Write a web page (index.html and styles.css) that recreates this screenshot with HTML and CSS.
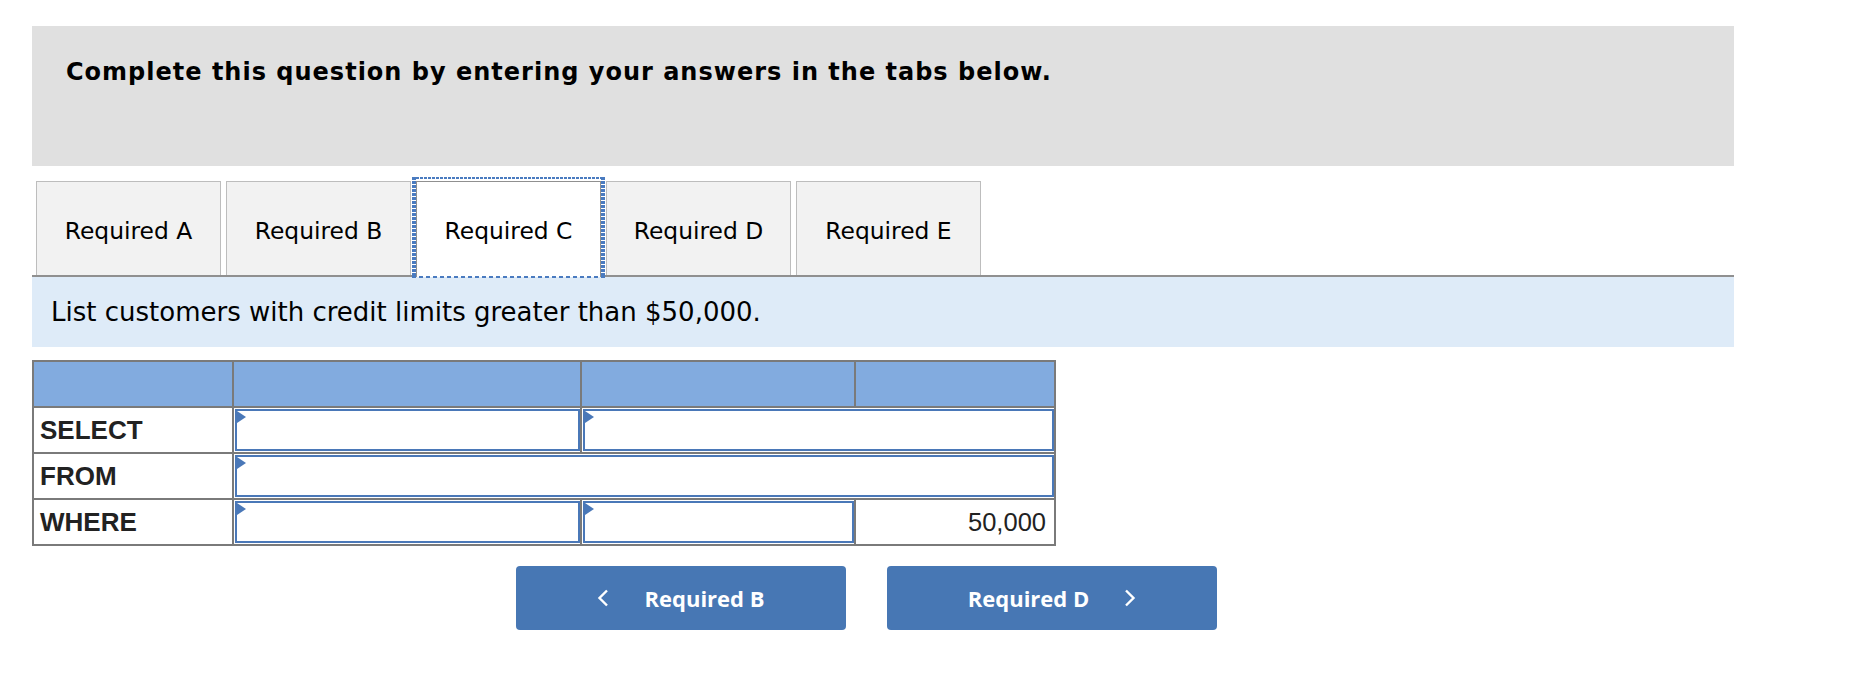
FILE: index.html
```html
<!doctype html>
<html lang="en">
  <head>
    <meta charset="UTF-8" />
    <meta name="viewport" content="width=device-width, initial-scale=1.0" />
    <title>Required C</title>
    <link rel="stylesheet" href="styles.css">
  </head>
  <body>
    <div class="page">
      <div class="prompt">
        <h2>Complete this question by entering your answers in the tabs below.</h2>
      </div>

      <div class="tabs">
        <div class="tab">Required A</div>
        <div class="tab">Required B</div>
        <div class="tab active">Required C</div>
        <div class="tab">Required D</div>
        <div class="tab">Required E</div>
      </div>

      <div class="task">List customers with credit limits greater than $50,000.</div>

      <div class="sql">
        <div class="head"></div>
        <div class="head"></div>
        <div class="head"></div>
        <div class="head"></div>

        <div class="label">SELECT</div>
        <div class="cell"><div class="entry"><input type="text" /></div></div>
        <div class="cell span-2"><div class="entry"><input type="text" /></div></div>

        <div class="label">FROM</div>
        <div class="cell span-3"><div class="entry"><input type="text" /></div></div>

        <div class="label">WHERE</div>
        <div class="cell"><div class="entry"><input type="text" /></div></div>
        <div class="cell"><div class="entry"><input type="text" /></div></div>
        <div class="value">50,000</div>
      </div>

      <div class="nav">
        <button class="nav-btn">
          <svg width="12" height="18" viewBox="0 0 12 18"><polyline points="10,1.5 2.5,9 10,16.5" fill="none" stroke="#fff" stroke-width="2.4" /></svg>
          <span>Required B</span>
        </button>
        <button class="nav-btn">
          <span>Required D</span>
          <svg width="12" height="18" viewBox="0 0 12 18"><polyline points="2,1.5 9.5,9 2,16.5" fill="none" stroke="#fff" stroke-width="2.4" /></svg>
        </button>
      </div>
    </div>
  </body>
</html>
```

FILE: styles.css
```css
body {
  margin: 0;
  font-family: "DejaVu Sans", Verdana, sans-serif;
  color: #000;
}
.page {
  width: 1702px;
  padding: 26px 0 0 32px;
}
.prompt {
  height: 140px;
  box-sizing: border-box;
  padding: 32px 0 0 34px;
  background-color: #e0e0e0;
}
.prompt h2 {
  margin: 0;
  font-size: 24px;
  line-height: 28px;
  font-weight: bold;
  letter-spacing: 1px;
}
.tabs {
  display: flex;
  align-items: flex-start;
  gap: 5px;
  margin-top: 15px;
  padding-left: 4px;
}
.tab {
  width: 185px;
  height: 94px;
  box-sizing: border-box;
  padding-top: 4px;
  display: flex;
  align-items: center;
  justify-content: center;
  border: 1px solid #bdbdbd;
  border-bottom: none;
  background-color: #f2f2f2;
  font-size: 23.4px;
}
.tab.active {
  position: relative;
  z-index: 1;
  height: 96px;
  margin-bottom: -2px;
  padding-bottom: 2px;
  border-color: #909090;
  background-color: #fff;
}
/* focus ring round the current tab */
.tab.active::after {
  content: "";
  position: absolute;
  top: -5px;
  left: -5px;
  right: -5px;
  bottom: -1px;
  pointer-events: none;
  background:
    repeating-linear-gradient(90deg, #4a7bc0 0 3px, transparent 3px 4px) top / 100% 2px no-repeat,
    repeating-linear-gradient(90deg, #4a7bc0 0 4px, transparent 4px 7px) bottom / 100% 2px no-repeat,
    repeating-linear-gradient(180deg, #4a7bc0 0 3px, transparent 3px 4px) left / 4px 100% no-repeat,
    repeating-linear-gradient(180deg, #4a7bc0 0 3px, transparent 3px 4px) right / 4px 100% no-repeat;
}
.task {
  height: 72px;
  box-sizing: border-box;
  padding-left: 19px;
  display: flex;
  align-items: center;
  border-top: 2px solid #909090;
  background-color: #deebf8;
  font-size: 26px;
}
.sql {
  display: grid;
  grid-template-columns: 198px 346px 272px 198px;
  grid-auto-rows: 44px;
  gap: 2px;
  width: max-content;
  margin-top: 13px;
  border: 2px solid #7a7a7a;
  background-color: #7a7a7a;
  font-family: "Liberation Sans", Arial, sans-serif;
  font-size: 25.5px;
  color: #222;
}
.head {
  background-color: #82abdf;
}
.label,
.value,
.cell {
  display: flex;
  align-items: center;
  background-color: #fff;
}
.label {
  padding-left: 6px;
  font-size: 26px;
  font-weight: bold;
}
.value {
  justify-content: flex-end;
  padding-right: 8px;
}
.cell {
  padding: 1px 0 1px 1px;
}
.span-2 {
  grid-column: span 2;
}
.span-3 {
  grid-column: span 3;
}
.entry {
  position: relative;
  width: 100%;
  height: 100%;
}
.entry::before {
  content: "";
  position: absolute;
  left: 2px;
  top: 2px;
  border-left: 9px solid #4a78b8;
  border-top: 6px solid transparent;
  border-bottom: 6px solid transparent;
}
.entry input {
  display: block;
  width: 100%;
  height: 100%;
  box-sizing: border-box;
  margin: 0;
  padding: 0 8px;
  border: 2px solid #4a78b8;
  font: inherit;
}
.nav {
  display: flex;
  gap: 41px;
  margin-top: 20px;
  padding-left: 484px;
}
.nav-btn {
  width: 330px;
  height: 64px;
  display: flex;
  align-items: center;
  justify-content: center;
  gap: 35px;
  border: none;
  border-radius: 4px;
  background-color: #4777b4;
  color: #fff;
  font-family: "Open Sans", "Liberation Sans", sans-serif;
  font-size: 22px;
  font-weight: bold;
}
```
